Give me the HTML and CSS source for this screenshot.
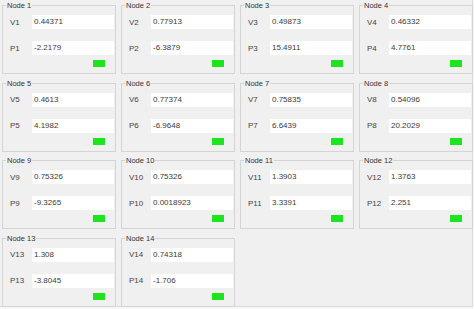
FILE: index.html
```html
<!DOCTYPE html>
<html>
<head>
<meta charset="utf-8">
<link rel="stylesheet" href="styles.css">
</head>
<body>
<div class="frame">
  <div class="grid">
    <div class="panel"><div class="title">Node 1</div>
      <div class="row"><span class="lbl">V1</span><div class="field">0.44371</div></div>
      <div class="row row-p"><span class="lbl">P1</span><div class="field">-2.2179</div></div>
      <div class="led"></div></div>
    <div class="panel"><div class="title">Node 2</div>
      <div class="row"><span class="lbl">V2</span><div class="field">0.77913</div></div>
      <div class="row row-p"><span class="lbl">P2</span><div class="field">-6.3879</div></div>
      <div class="led"></div></div>
    <div class="panel"><div class="title">Node 3</div>
      <div class="row"><span class="lbl">V3</span><div class="field">0.49873</div></div>
      <div class="row row-p"><span class="lbl">P3</span><div class="field">15.4911</div></div>
      <div class="led"></div></div>
    <div class="panel"><div class="title">Node 4</div>
      <div class="row"><span class="lbl">V4</span><div class="field">0.46332</div></div>
      <div class="row row-p"><span class="lbl">P4</span><div class="field">4.7761</div></div>
      <div class="led"></div></div>

    <div class="panel"><div class="title">Node 5</div>
      <div class="row"><span class="lbl">V5</span><div class="field">0.4613</div></div>
      <div class="row row-p"><span class="lbl">P5</span><div class="field">4.1982</div></div>
      <div class="led"></div></div>
    <div class="panel"><div class="title">Node 6</div>
      <div class="row"><span class="lbl">V6</span><div class="field">0.77374</div></div>
      <div class="row row-p"><span class="lbl">P6</span><div class="field">-6.9648</div></div>
      <div class="led"></div></div>
    <div class="panel"><div class="title">Node 7</div>
      <div class="row"><span class="lbl">V7</span><div class="field">0.75835</div></div>
      <div class="row row-p"><span class="lbl">P7</span><div class="field">6.6439</div></div>
      <div class="led"></div></div>
    <div class="panel"><div class="title">Node 8</div>
      <div class="row"><span class="lbl">V8</span><div class="field">0.54096</div></div>
      <div class="row row-p"><span class="lbl">P8</span><div class="field">20.2029</div></div>
      <div class="led"></div></div>

    <div class="panel"><div class="title">Node 9</div>
      <div class="row"><span class="lbl">V9</span><div class="field">0.75326</div></div>
      <div class="row row-p"><span class="lbl">P9</span><div class="field">-9.3265</div></div>
      <div class="led"></div></div>
    <div class="panel"><div class="title">Node 10</div>
      <div class="row"><span class="lbl">V10</span><div class="field">0.75326</div></div>
      <div class="row row-p"><span class="lbl">P10</span><div class="field">0.0018923</div></div>
      <div class="led"></div></div>
    <div class="panel"><div class="title">Node 11</div>
      <div class="row"><span class="lbl">V11</span><div class="field">1.3903</div></div>
      <div class="row row-p"><span class="lbl">P11</span><div class="field">3.3391</div></div>
      <div class="led"></div></div>
    <div class="panel"><div class="title">Node 12</div>
      <div class="row"><span class="lbl">V12</span><div class="field">1.3763</div></div>
      <div class="row row-p"><span class="lbl">P12</span><div class="field">2.251</div></div>
      <div class="led"></div></div>

    <div class="panel"><div class="title">Node 13</div>
      <div class="row"><span class="lbl">V13</span><div class="field">1.308</div></div>
      <div class="row row-p"><span class="lbl">P13</span><div class="field">-3.8045</div></div>
      <div class="led"></div></div>
    <div class="panel"><div class="title">Node 14</div>
      <div class="row"><span class="lbl">V14</span><div class="field">0.74318</div></div>
      <div class="row row-p"><span class="lbl">P14</span><div class="field">-1.706</div></div>
      <div class="led"></div></div>
  </div>
</div>
</body>
</html>
```
FILE: styles.css
```css
html, body {
  margin: 0;
  padding: 0;
  background: #f7f7f7;
}
body {
  font-family: "Liberation Sans", Arial, sans-serif;
  color: #3a3a3a;
}
.frame {
  box-sizing: border-box;
  width: 473px;
  height: 307px;
  background: #f0f0f0;
  border-right: 1px solid #dadada;
  border-bottom: 1px solid #dadada;
  padding: 5px 0 0 2px;
}
.grid {
  display: grid;
  grid-template-columns: repeat(4, 114px);
  grid-auto-rows: 69px;
  column-gap: 5px;
  row-gap: 8.5px;
}
.panel {
  box-sizing: border-box;
  border: 1px solid #d4d4d4;
  display: flex;
  flex-direction: column;
}
.title {
  align-self: flex-start;
  margin: -5px 0 0 3px;
  padding: 0 1px;
  height: 9px;
  line-height: 9px;
  font-size: 7.5px;
  color: #333;
  background: #f0f0f0;
}
.row {
  display: flex;
  align-items: center;
  margin-top: 5px;
  height: 14px;
}
.row-p {
  margin-top: 12px;
}
.lbl {
  box-sizing: border-box;
  width: 29px;
  padding-left: 7px;
  font-size: 8px;
  color: #444;
}
.field {
  box-sizing: border-box;
  width: 82px;
  height: 14px;
  line-height: 14px;
  background: #ffffff;
  padding-left: 2px;
  font-size: 8px;
  color: #3a3a3a;
}
.led {
  align-self: flex-end;
  margin: 5px 10px 0 0;
  width: 12px;
  height: 7px;
  background: #1de51d;
}
```
